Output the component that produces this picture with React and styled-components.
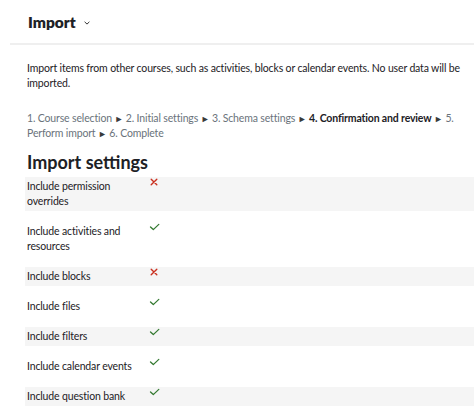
import React from 'react';
import styled, { createGlobalStyle } from 'styled-components';

const GlobalStyle = createGlobalStyle`
  body {
    margin: 0;
    background: #fff;
    font-family: Lato, "Open Sans", sans-serif;
    color: #1d2125;
  }
`

const Header = styled.div`
  margin-left: 10px;
  height: 43px;
  display: flex;
  align-items: center;
  padding-left: 18px;
  border-bottom: 2px solid #efefef;
`
const Title = styled.h1`
  margin: 0;
  font-size: 15.5px;
  font-weight: 800;
`
const Caret = styled.span`
  margin-left: 7px;
  display: inline-flex;
  margin-top: 2px;
`
const Content = styled.div`
  padding: 16px 8px 0 27px;
`
const Intro = styled.p`
  margin: 0;
  font-size: 10.5px;
  letter-spacing: -0.15px;
  line-height: 15px;
`
const Steps = styled.div`
  margin-top: 20px;
  font-size: 10.5px;
  letter-spacing: -0.15px;
  line-height: 15px;
  color: #6a737b;
`
const Step = styled.span`
  color: ${p => (p.current ? '#1d2125' : '#6a737b')};
  font-weight: ${p => (p.current ? 700 : 400)};
`
const Sep = styled.span`
  color: #3a3a3a;
  font-size: 9px;
`
const Heading = styled.h2`
  margin: 10px 0 3px;
  font-size: 18px;
  line-height: 23px;
  font-weight: 700;
`
const Table = styled.div`
  margin-left: -2px;
  margin-right: -8px;
`
const Row = styled.div`
  display: flex;
  align-items: flex-start;
  background: ${p => (p.striped ? '#f5f5f5' : 'transparent')};
  padding: ${p => (p.striped ? '2px 0' : '13px 0')};
`
const Label = styled.div`
  width: 108px;
  padding: 0 12px 0 2px;
  font-size: 10.5px;
  letter-spacing: -0.15px;
  line-height: 15px;
`
const Value = styled.div`
  display: flex;
  margin-top: -2px;
  padding-left: 2px;
`

const Cross = () => (
  <svg width="10" height="10" viewBox="0 0 10 10">
    <path d="M2.2 2.2 L7.8 7.8 M7.8 2.2 L2.2 7.8" stroke="#ca3120" strokeWidth="1.4" strokeLinecap="round" fill="none" />
  </svg>
)
const Check = () => (
  <svg width="11" height="10" viewBox="0 0 11 10">
    <path d="M1.5 5 L4.3 7.6 L9.8 2.4" stroke="#357a32" strokeWidth="1.3" strokeLinecap="round" strokeLinejoin="round" fill="none" />
  </svg>
)

const steps = [
  '1. Course selection',
  '2. Initial settings',
  '3. Schema settings',
  '4. Confirmation and review',
  '5. Perform import',
  '6. Complete',
]

const settings = [
  ['Include permission overrides', false],
  ['Include activities and resources', true],
  ['Include blocks', false],
  ['Include files', true],
  ['Include filters', true],
  ['Include calendar events', true],
  ['Include question bank', true],
]

const App = () => {
  return (
    <>
      <GlobalStyle />
      <Header>
        <Title>Import</Title>
        <Caret>
          <svg width="8" height="6" viewBox="0 0 8 6">
            <path d="M1.6 1.8 L4 4.1 L6.4 1.8" stroke="#333" strokeWidth="1" fill="none" />
          </svg>
        </Caret>
      </Header>
      <Content>
        <Intro>
          Import items from other courses, such as activities, blocks or calendar events. No user data will be imported.
        </Intro>
        <Steps>
          {steps.map((s, i) => (
            <React.Fragment key={s}>
              <Step current={i === 3}>{s}</Step>
              {i < steps.length - 1 && <> <Sep>►</Sep> </>}
            </React.Fragment>
          ))}
        </Steps>
        <Heading>Import settings</Heading>
        <Table>
          {settings.map(([label, on], i) => (
            <Row key={label} striped={i % 2 === 0}>
              <Label>{label}</Label>
              <Value>{on ? <Check /> : <Cross />}</Value>
            </Row>
          ))}
        </Table>
      </Content>
    </>
  );
};

export default App;
